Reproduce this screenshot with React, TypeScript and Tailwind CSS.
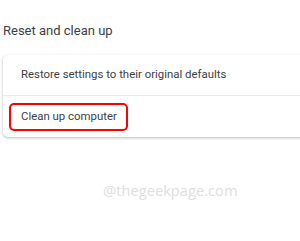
export default function App() {
  return (
    <div className="w-[300px] h-[241px] bg-white overflow-hidden relative" style={{ fontFamily: "Roboto, 'Liberation Sans', sans-serif" }}>
      <div className="pl-[3px] pt-[24px] text-[13px] leading-[14px] text-[#3c4043]">Reset and clean up</div>
      <div className="ml-[3px] mt-[17px] w-[310px] bg-white rounded-[5px] shadow-[0_1px_3px_rgba(0,0,0,0.28)]">
        <div className="h-[41px] pl-[18px] flex items-center text-[11.4px] text-[#3c4043] border-b border-[#e8eaed]">
          Restore settings to their original defaults
        </div>
        <div className="h-[41px] flex items-center pl-[6px]">
          <div className="w-[119px] h-[28px] border-2 border-[#ff0000] rounded-[5px] pl-[10px] flex items-center text-[11.4px] text-[#3c4043]">
            Clean up computer
          </div>
        </div>
      </div>
      <div className="mt-[42px] pl-[103px] text-[14.7px] text-[#e0e0e0]" style={{ fontFamily: "'Open Sans', sans-serif" }}>@thegeekpage.com</div>
    </div>
  );
}
